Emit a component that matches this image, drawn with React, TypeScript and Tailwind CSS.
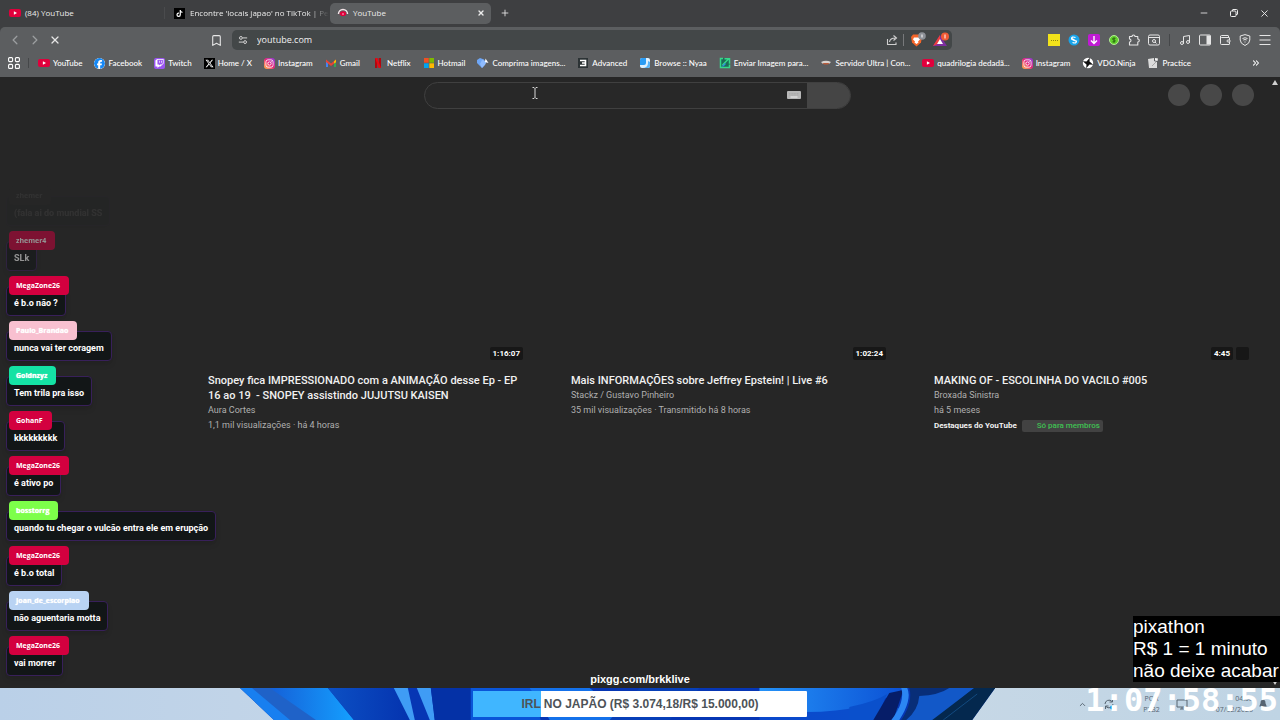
import type { ReactNode } from 'react'
import { Bookmark, ChevronLeft, ChevronRight, ChevronUp, ChevronsRight, Minus, Music, Plus, Wallet, X } from 'lucide-react'
import { FaFacebook, FaInstagram, FaTiktok, FaTwitch, FaXTwitter } from 'react-icons/fa6'

type Message = { name: string; text: string; tag: string; fade?: string; soft?: boolean }

const messages: Message[] = [
    { name: 'zhemer', text: '(fala ai do mundial SS', tag: 'bg-[#262626]', fade: 'opacity-5' },
    { name: 'zhemer4', text: 'SLk', tag: 'bg-[#d3003f]', fade: 'opacity-50' },
    { name: 'MegaZone26', text: 'é b.o não ?', tag: 'bg-[#d3003f]' },
    { name: 'Paulo_Brandao', text: 'nunca vai ter coragem', tag: 'bg-[#f8c0d0]', soft: true },
    { name: 'Goldnzyz', text: 'Tem trila pra isso', tag: 'bg-[#14e2a4]', soft: true },
    { name: 'GohanF', text: 'kkkkkkkkk', tag: 'bg-[#d3003f]' },
    { name: 'MegaZone26', text: 'é ativo po', tag: 'bg-[#d3003f]' },
    { name: 'bosstorrg', text: 'quando tu chegar o vulcão entra ele em erupção', tag: 'bg-[#7dff4a]', soft: true },
    { name: 'MegaZone26', text: 'é b.o total', tag: 'bg-[#d3003f]' },
    { name: 'Joan_de_escorpiao', text: 'não aguentaria motta', tag: 'bg-[#b9d3f3]', soft: true },
    { name: 'MegaZone26', text: 'vai morrer', tag: 'bg-[#d3003f]' },
]

const videos = [
    {
        title: 'Snopey fica IMPRESSIONADO com a ANIMAÇÃO desse Ep - EP 16 ao 19 \u00a0- SNOPEY assistindo JUJUTSU KAISEN',
        channel: 'Aura Cortes',
        meta: '1,1 mil visualizações · há 4 horas',
        duration: '1:16:07',
    },
    {
        title: 'Mais INFORMAÇÕES sobre Jeffrey Epstein! | Live #6',
        channel: 'Stackz / Gustavo Pinheiro',
        meta: '35 mil visualizações · Transmitido há 8 horas',
        duration: '1:02:24',
    },
    {
        title: 'MAKING OF - ESCOLINHA DO VACILO #005',
        channel: 'Broxada Sinistra',
        meta: 'há 5 meses',
        duration: '4:45',
        members: true,
    },
]

function YouTubeIcon() {
    return (
        <svg viewBox="0 0 12 12" className="size-3 shrink-0">
            <rect x="0" y="2" width="12" height="8" rx="2" fill="#e0003c" />
            <path d="M4.9 4.2v3.6L8 6z" fill="#fff" />
        </svg>
    )
}

function InstagramIcon() {
    return (
        <span className="flex size-[11px] shrink-0 items-center justify-center rounded-[3px] bg-linear-to-tr from-[#ffb52e] via-[#e8207a] to-[#8a2be0] text-white">
            <FaInstagram className="size-[9px]" />
        </span>
    )
}

function GmailIcon() {
    return (
        <svg viewBox="0 0 12 12" className="size-3 shrink-0">
            <path d="M1 3v7h2V5z" fill="#4285f4" />
            <path d="M11 3v7H9V5z" fill="#34a853" />
            <path d="M1 2.6 6 6.6l5-4v2.4L6 9 1 5z" fill="#ea4335" />
            <path d="M9 4.2l2-1.6v2.6L9 6.6z" fill="#fbbc04" />
        </svg>
    )
}

function NetflixIcon() {
    return (
        <svg viewBox="0 0 12 12" className="size-3 shrink-0">
            <path d="M3 1h2.3v10H3zM6.7 1H9v10H6.7z" fill="#b1060f" />
            <path d="M3 1h2.3L9 11H6.7z" fill="#e50914" />
        </svg>
    )
}

function MicrosoftIcon() {
    return (
        <svg viewBox="0 0 12 12" className="size-3 shrink-0">
            <path d="M1 1h4.7v4.7H1z" fill="#f25022" />
            <path d="M6.3 1H11v4.7H6.3z" fill="#7fba00" />
            <path d="M1 6.3h4.7V11H1z" fill="#00a4ef" />
            <path d="M6.3 6.3H11V11H6.3z" fill="#ffb900" />
        </svg>
    )
}

function CompressIcon() {
    return (
        <svg viewBox="0 0 12 12" className="size-3 shrink-0">
            <path d="M0 3 3 1l4 1.500v6L5 11 2 8 0 6z" fill="#6ea6f5" />
            <path d="M5 3l5 1-2 4-3 3-2-4z" fill="#8fbcff" />
            <path d="M8.500 1.500 11.500 6 8 5z" fill="#fff" />
        </svg>
    )
}

function AdvancedIcon() {
    return (
        <svg viewBox="0 0 12 12" className="size-3 shrink-0">
            <rect x="1" y="1" width="10" height="10" fill="#2c3335" />
            <path d="M3 3.5h5.500v5H3M5 6h3.500" fill="none" stroke="#fff" strokeWidth="1.6" />
        </svg>
    )
}

function NyaaIcon() {
    return (
        <svg viewBox="0 0 12 12" className="size-3 shrink-0">
            <rect x="1" y="1" width="10" height="10" rx="2" fill="#dff1ff" />
            <path d="M1 3q0-2 2-2h4v5q0 2-2 2H1z" fill="#2a9cf5" />
            <path d="M3 11q6 0 6-5V4l2 1v4q0 2-2 2z" fill="#58b4f8" />
        </svg>
    )
}

function UploadIcon() {
    return (
        <svg viewBox="0 0 12 12" className="size-3 shrink-0">
            <rect x="1" y="1" width="10" height="10" rx="1" fill="#1c6b57" />
            <path d="M4 1.500H1.500v9h9V7.500M3.500 8 9.500 2M5.500 1.700h5v5" fill="none" stroke="#35d88a" strokeWidth="1.500" />
            <path d="M2.500 9.500 6 6l1 1-2.500 2.500z" fill="#2f8fe0" />
        </svg>
    )
}

function ServerIcon() {
    return (
        <svg viewBox="0 0 12 12" className="size-3 shrink-0">
            <path d="M1 5q5-2.500 10 0L9 7H3z" fill="#d8d3cf" />
            <path d="M2.500 6h7L8 7.500H4z" fill="#b65b3c" />
        </svg>
    )
}

function NinjaIcon() {
    return (
        <svg viewBox="0 0 12 12" className="size-3 shrink-0">
            <circle cx="6" cy="6" r="5.200" fill="#fff" />
            <path d="M7.800 0.800 7.500 4.500 11.200 7.800 7.500 7.500 4.200 11.200 4.500 7.500 0.800 4.200 4.500 4.500z" fill="#101010" />
        </svg>
    )
}

function PracticeIcon() {
    return (
        <svg viewBox="0 0 12 12" className="size-3 shrink-0">
            <path d="M1 2l6-1v3l3 1v6H2z" fill="#dcdcdc" />
            <path d="M8 1l3 .500-.500 2.500L8 3.500z" fill="#f4f4f4" />
            <path d="M5 9l4-4" stroke="#a7a7a7" strokeWidth="1" />
        </svg>
    )
}

const bookmarks: { label: string; icon: ReactNode }[] = [
    { label: 'YouTube', icon: <YouTubeIcon /> },
    {
        label: 'Facebook',
        icon: <FaFacebook className="size-[11px] shrink-0 rounded-full bg-white text-[#1588f5]" />,
    },
    {
        label: 'Twitch',
        icon: (
            <span className="flex size-[11px] shrink-0 items-center justify-center rounded-xs bg-[#9a55f0] text-white">
                <FaTwitch className="size-[9px]" />
            </span>
        ),
    },
    {
        label: 'Home / X',
        icon: (
            <span className="flex size-[11px] shrink-0 items-center justify-center bg-black text-white">
                <FaXTwitter className="size-[9px]" />
            </span>
        ),
    },
    { label: 'Instagram', icon: <InstagramIcon /> },
    { label: 'Gmail', icon: <GmailIcon /> },
    { label: 'Netflix', icon: <NetflixIcon /> },
    { label: 'Hotmail', icon: <MicrosoftIcon /> },
    { label: 'Comprima imagens...', icon: <CompressIcon /> },
    { label: 'Advanced', icon: <AdvancedIcon /> },
    { label: 'Browse :: Nyaa', icon: <NyaaIcon /> },
    { label: 'Enviar Imagem para...', icon: <UploadIcon /> },
    { label: 'Servidor Ultra | Con...', icon: <ServerIcon /> },
    { label: 'quadrilogia dedadã...', icon: <YouTubeIcon /> },
    { label: 'Instagram', icon: <InstagramIcon /> },
    { label: 'VDO.Ninja', icon: <NinjaIcon /> },
    { label: 'Practice', icon: <PracticeIcon /> },
]

function TabStrip() {
    return (
        <div className="flex h-[27px] items-center bg-[#3e3f41] pb-px text-[8px] text-[#ececec]">
            <div className="flex w-[165px] items-center gap-1 border-r border-[#4a4b4d] pl-[9px]">
                <YouTubeIcon />
                <span>(84) YouTube</span>
            </div>
            <div className="flex w-[165px] items-center gap-[5px] pl-[9px]">
                <span className="flex size-[11px] shrink-0 items-center justify-center bg-black text-white">
                    <FaTiktok className="size-[7px]" />
                </span>
                <span className="whitespace-nowrap mask-r-from-85%">Encontre 'locais japao' no TikTok | Pe</span>
            </div>
            <div className="flex h-[21px] w-[161px] items-center gap-1 rounded-[5px] bg-[#5c5e60] pr-[6px] pl-[7px]">
                <svg viewBox="0 0 12 12" className="size-3 shrink-0">
                    <path d="M1.500 7A4.500 4.500 0 0 1 10.500 7" fill="none" stroke="#f4e4e8" strokeWidth="1.500" />
                    <path d="M2.700 7.500a3.300 3.300 0 0 1 6.600 0L7.500 9h-3z" fill="#e0003c" />
                    <circle cx="6" cy="7" r=".700" fill="#fff" />
                </svg>
                <span className="flex-1">YouTube</span>
                <button type="button" aria-label="Fechar guia">
                    <X className="size-2" strokeWidth={4} />
                </button>
            </div>
            <button type="button" aria-label="Nova guia" className="ml-[9px]">
                <Plus className="size-[10px]" strokeWidth={2} />
            </button>
            <div className="ml-auto flex items-center gap-5 pr-[10px]">
                <button type="button" aria-label="Minimizar">
                    <Minus className="size-[10px]" />
                </button>
                <button type="button" aria-label="Restaurar">
                    <svg viewBox="0 0 10 10" className="size-[10px]" fill="none" stroke="currentColor">
                        <rect x="1.500" y="3" width="5.500" height="5.500" rx="1" />
                        <path d="M3.500 3V2q0-.500.500-.500h3.500q1 0 1 1V6q0 .500-.500.500H7" />
                    </svg>
                </button>
                <button type="button" aria-label="Fechar">
                    <X className="size-[11px]" />
                </button>
            </div>
        </div>
    )
}

function AddressBar() {
    return (
        <div className="flex h-5 w-[720px] items-center rounded-[5px] bg-[#434748] pr-0.5 pl-[6px]">
            <svg viewBox="0 0 12 12" className="size-[10px]" fill="none" stroke="#d5d5d5" strokeWidth="1.200">
                <circle cx="3.500" cy="3.500" r="1.700" />
                <path d="M5.500 3.500H11M1 8.500h5.500" />
                <circle cx="8.500" cy="8.500" r="1.700" />
            </svg>
            <input
                type="text"
                aria-label="Endereço"
                defaultValue="youtube.com"
                className="ml-[9px] min-w-0 flex-1 bg-transparent text-[9px] text-[#f2f2f2] outline-none"
            />
            <div className="flex items-center gap-[5px]">
                <button type="button" aria-label="Compartilhar">
                    <svg viewBox="0 0 12 12" className="size-3" fill="none" stroke="#cfcfcf" strokeWidth="1.100">
                        <path d="M1.500 5v5.500h8.500V8.500M3.500 8q.500-4 6-4M7.500 1.500 10.500 4 7.500 6.500" />
                    </svg>
                </button>
                <span className="h-3 w-px bg-[#77797b]" />
                <button type="button" aria-label="Brave Shields" className="ml-px">
                    <svg viewBox="0 0 16 16" className="size-4">
                        <path d="M3 2.500h7l2 2.500-1 5.500-4.500 4L2 10.500 1 5z" fill="#f4662a" />
                        <path d="M4 5.500h5l1 2-2 2 .500 1-2 1.500-2-1.500.500-1-2-2z" fill="#fff" />
                        <circle cx="12" cy="4" r="3.800" fill="#8d9197" />
                        <path d="M12 2.500v3" stroke="#fff" strokeWidth="1" />
                    </svg>
                </button>
                <button type="button" aria-label="Brave Rewards" className="ml-px">
                    <svg viewBox="0 0 18 16" className="h-4 w-[18px]">
                        <path d="M8 3 1 14h14z" fill="#7d2ea0" />
                        <path d="M8 3 1 14l7-3z" fill="#ef3d3d" />
                        <path d="M8 7l-3 5h6z" fill="#fff" />
                        <circle cx="13" cy="4.500" r="4" fill="#f05a35" />
                        <path d="M13 2.500v4" stroke="#fff" strokeWidth="1" />
                    </svg>
                </button>
            </div>
        </div>
    )
}

function Toolbar() {
    return (
        <div className="bg-[#3e3f41]">
            <div className="flex h-[27px] items-center rounded-t-[5px] bg-[#5c5e60] px-[9px] pb-px text-[#e6e6e6]">
                <div className="flex w-[223px] items-center gap-2 pr-[9px]">
                    <button type="button" aria-label="Voltar" className="text-[#9b9d9f]">
                        <ChevronLeft className="size-3 scale-125" strokeWidth={2} />
                    </button>
                    <button type="button" aria-label="Avançar" className="text-[#9b9d9f]">
                        <ChevronRight className="size-3 scale-125" strokeWidth={2} />
                    </button>
                    <button type="button" aria-label="Parar">
                        <X className="size-3" strokeWidth={2.5} />
                    </button>
                    <button type="button" aria-label="Favoritar" className="ml-auto">
                        <Bookmark className="size-[13px]" strokeWidth={2} />
                    </button>
                </div>
                <AddressBar />
                <div className="ml-auto flex items-center gap-2">
                    <span className="flex size-3 items-center justify-center bg-[#f2e21b]">
                        <span className="w-[7px] border-t border-dotted border-[#8d8410]" />
                    </span>
                    <svg viewBox="0 0 12 12" className="size-3">
                        <circle cx="6" cy="6" r="5.500" fill="#18a4ea" />
                        <path d="M7.500 3.500Q3.500 2 3.500 5q2.500 2 5 2Q8.500 10 4.500 8.500M4 4.500l4.500 3" fill="none" stroke="#fff" strokeWidth="1.200" />
                    </svg>
                    <svg viewBox="0 0 12 12" className="size-3">
                        <rect width="12" height="12" rx="2" fill="#c01ad4" />
                        <path d="M6 2V9.500M3 6.500l3 3 3-3" fill="none" stroke="#fff" strokeWidth="1.400" />
                    </svg>
                    <svg viewBox="0 0 12 12" className="size-3">
                        <circle cx="6" cy="6" r="4.500" fill="#62d12d" stroke="#b5ec97" strokeWidth="1" />
                        <path d="M7.500 4.300H5.300q-1 0-.800.900t1.500.800 1.200.900-.900.900H4.500M6 3.300v5.400" fill="none" stroke="#245a0c" strokeWidth=".800" />
                    </svg>
                    <svg viewBox="0 0 12 12" className="size-3" fill="none" stroke="currentColor" strokeWidth="1.100">
                        <path d="M1.500 2.500H4a1.500 1.500 0 0 1 3 0h2.800V5a1.500 1.500 0 0 1 0 3v3H1.500V8a1.500 1.500 0 0 0 0-3z" strokeLinejoin="round" />
                    </svg>
                    <svg viewBox="0 0 12 12" className="size-3" fill="none" stroke="currentColor">
                        <rect x=".500" y="1" width="11" height="10" rx="1.500" />
                        <path d="M1 3.500h10M7 8l1.500 1.500" />
                        <circle cx="6" cy="7" r="1.500" />
                    </svg>
                    <span className="mx-px h-3 w-px bg-[#454749]" />
                    <Music className="size-3" />
                    <svg viewBox="0 0 12 12" className="size-3" fill="none" stroke="currentColor">
                        <rect x=".500" y="1" width="11" height="10" rx="1" />
                        <path d="M7.500 1.500h3.500v9H7.500z" fill="currentColor" stroke="none" />
                    </svg>
                    <Wallet className="size-3" />
                    <svg viewBox="0 0 12 12" className="size-3" fill="none" stroke="currentColor">
                        <path d="M6 .600 10.800 2v4q0 3.500-4.800 5.500Q1.200 9.500 1.200 6V2z" />
                        <path d="M3.500 4.500q2.500-1.500 5 0M4.300 6q1.700-1 3.400 0M6 7.500v1" />
                    </svg>
                    <button type="button" aria-label="Menu">
                        <svg viewBox="0 0 12 12" className="size-3" stroke="currentColor">
                            <path d="M.500 1.500h11M.500 6h11M.500 10.500h11" />
                        </svg>
                    </button>
                </div>
            </div>
        </div>
    )
}

function BookmarksBar() {
    return (
        <nav className='flex h-[23px] items-center bg-[#5c5e60] pb-[5px] pl-2 font-["Lato","Open_Sans",sans-serif] text-white'>
            <svg viewBox="0 0 12 12" className="size-3" fill="none" stroke="currentColor" strokeWidth="1.100">
                <rect x=".600" y=".600" width="4" height="4" rx="1" />
                <rect x="7.400" y=".600" width="4" height="4" rx="1" />
                <rect x=".600" y="7.400" width="4" height="4" rx="1" />
                <rect x="7.400" y="7.400" width="4" height="4" rx="1" />
            </svg>
            <span className="mr-[9px] ml-2 h-[10px] w-px bg-[#454749]" />
            <ul className="flex gap-3">
                {bookmarks.map((bookmark, i) => (
                    <li key={i}>
                        <a href="#" className="flex items-center gap-[3px] text-[8px] leading-3 font-medium whitespace-nowrap">
                            {bookmark.icon}
                            {bookmark.label}
                        </a>
                    </li>
                ))}
            </ul>
            <button type="button" aria-label="Mais favoritos" className="mr-[19px] ml-auto">
                <ChevronsRight className="size-[10px]" strokeWidth={2.5} />
            </button>
        </nav>
    )
}

function SearchHeader() {
    return (
        <header className="flex h-9 items-center pr-4 pl-5">
            <div className="flex-1" />
            <form className="flex h-[27px] w-[427px] overflow-hidden rounded-full border border-[#404040] bg-[#282828]">
                <div className="relative flex min-w-0 flex-1 items-center pr-[6px]">
                    <input
                        type="text"
                        aria-label="Pesquisar"
                        className="h-full min-w-0 flex-1 bg-transparent px-4 text-[11px] text-white outline-none"
                    />
                    <svg viewBox="0 0 14 8" className="h-2 w-[14px]">
                        <rect width="14" height="8" rx="1" fill="#b8b8b8" />
                        <path d="M2 2.500h10M2 4h10" stroke="#a0a0a0" strokeWidth=".600" strokeDasharray="1 .600" />
                        <path d="M3.500 6h7" stroke="#efefef" strokeWidth="1" />
                    </svg>
                    {/* text cursor */}
                    <svg
                        viewBox="0 0 6 12"
                        className="absolute top-1 left-[107px] h-3 w-[6px]"
                        fill="none"
                        stroke="#d8d8d8"
                    >
                        <path d="M.500.500h1.500L3 1.500 4 .500h1.500M3 1.500v9M.500 11.500h1.500l1-1 1 1h1.500" />
                    </svg>
                </div>
                <button type="submit" aria-label="Buscar" className="w-[43px] bg-[#454545]" />
            </form>
            <div className="flex flex-1 justify-end gap-[10px]">
                <button type="button" aria-label="Criar" className="size-[22px] rounded-full bg-[#484848]" />
                <button type="button" aria-label="Notificações" className="size-[22px] rounded-full bg-[#484848]" />
                <button type="button" aria-label="Conta" className="size-[22px] rounded-full bg-[#484848]" />
            </div>
        </header>
    )
}

function VideoCard({ video }: { video: (typeof videos)[number] }) {
    return (
        <article>
            <div className="flex aspect-video items-end justify-end gap-[3px] p-[5px]">
                <span className="rounded-xs bg-[#171717] px-[3px] text-[8px] leading-[13px] font-bold text-white">
                    {video.duration}
                </span>
                {video.members && <span className="size-[13px] rounded-xs bg-[#171717]" />}
            </div>
            <div className="mt-2 pl-8 text-[9px] leading-[15px] text-[#b0b0b0]">
                <h3 className="pr-1 text-[11px] leading-[15px] font-medium text-[#f1f1f1]">
                    <a href="#">{video.title}</a>
                </h3>
                <p>{video.channel}</p>
                <p>{video.meta}</p>
                {video.members && (
                    <p className="flex items-center gap-[5px] text-[8px] font-bold text-[#f1f1f1]">
                        Destaques do YouTube
                        <span className="rounded-xs bg-[#424242] pr-[3px] pl-[15px] leading-3 font-medium text-[#3fc152]">
                            Só para membros
                        </span>
                    </p>
                )}
            </div>
        </article>
    )
}

function Chat() {
    return (
        <ul className="absolute bottom-3 left-[6px] flex flex-col gap-[5px]">
            {messages.map((message, i) => (
                <li key={i} className={`flex flex-col items-start ${message.fade ?? ''}`}>
                    <span
                        className={`z-10 ml-[3px] h-[19px] rounded-[4px] pr-[9px] pl-[7px] font-["Open_Sans"] text-[7px] leading-[19px] font-bold text-white ${
                            message.tag
                        } ${message.soft ? 'text-shadow-[0_0_1px_white]' : ''}`}
                    >
                        {message.name}
                    </span>
                    <span className="-mt-[9px] h-[30px] rounded-[4px] border border-[#38205a] bg-[#121617] px-[7px] pt-[3px] text-[9px] leading-[26px] font-bold whitespace-nowrap text-white shadow-md">
                        {message.text}
                    </span>
                </li>
            ))}
        </ul>
    )
}

function Wallpaper() {
    return (
        <svg
            viewBox="0 0 756 32"
            preserveAspectRatio="none"
            className="absolute inset-y-0 left-[18.75%] h-full w-[59%]"
            aria-hidden="true"
        >
            <defs>
                <linearGradient id="petal" x1="0" x2="1">
                    <stop offset="0" stopColor="#1560d8" />
                    <stop offset="1" stopColor="#14a0ff" />
                </linearGradient>
                <linearGradient id="deep" x1="0" x2="1">
                    <stop offset="0" stopColor="#0c50c4" />
                    <stop offset="1" stopColor="#0432ae" />
                </linearGradient>
                <linearGradient id="sweep" x1="0" x2="1">
                    <stop offset="0" stopColor="#2492f8" />
                    <stop offset="1" stopColor="#0b50d4" />
                </linearGradient>
                <linearGradient id="under" x1="0" x2="1">
                    <stop offset="0" stopColor="#0a48cc" />
                    <stop offset="1" stopColor="#0a50cc" />
                </linearGradient>
            </defs>
            <path d="M0 0h756l-23 32H34z" fill="#0636b4" />
            <path d="M0 0h40l50 32H34z" fill="#187ff0" />
            <path d="M12 0h20l46 32H50z" fill="#1f62c8" />
            <path d="M30 0h58l26 32H76z" fill="url(#petal)" />
            <path d="M88 0h70l14 32h-58z" fill="url(#deep)" />
            <path d="M154 0h14l7 32h-5z" fill="#3f9cf5" />
            <path d="M177 0h14l4 32h-5z" fill="#3f9cf5" />
            <path d="M191 0h40v32h-36z" fill="#0431a6" />
            <path d="M231 0h60l10 32h-70z" fill="#0a55d8" />
            <path d="M290 0h60l40 32h-80z" fill="#1471ea" />
            <path d="M400 0h60l-30 32h-60z" fill="#073fb8" />
            <path d="M520 20h140v12H520z" fill="url(#under)" />
            <path d="M520 0h145q-35 24-99 24h-46z" fill="url(#sweep)" />
            <path d="M610 19q25-5 38-13l-12 26h-26z" fill="#0a50cc" />
            <path d="M650 5l14-3-10 30h-20z" fill="#061d68" />
            <path d="M662 0h6q5 12-8 32h-8q14-18 10-32z" fill="#2b86f4" />
            <path d="M670 0h70l-40 32h-38q12-18 8-32z" fill="#082e78" />
            <path d="M680 8q20-1 30-8h25l-40 32h-28q12-10 13-24z" fill="#1258c8" />
            <path d="M735 0h21l-23 32h-40z" fill="#04284e" />
            <path d="M738 6 704 32" stroke="#134a80" fill="none" />
        </svg>
    )
}

function SystemTray() {
    return (
        <div className="relative ml-auto flex items-center pr-3 text-right text-[7px] leading-[11px] text-[#566471]">
            <ChevronUp className="mr-4 size-[9px]" strokeWidth={2.5} />
            <svg viewBox="0 0 12 12" className="mr-7 size-3" fill="none" stroke="currentColor">
                <path d="M2 6a4 4 0 0 1 7-2.500M9.500 1v3h-3M10 6a4 4 0 0 1-7 2.500M2.500 11V8h3" />
                <circle cx="9" cy="9.500" r="2" fill="#1b8fe6" stroke="none" />
            </svg>
            <p className="mr-4 text-center">
                POR
                <br />
                PTB2
            </p>
            <svg viewBox="0 0 12 12" className="mr-7 size-3" fill="none" stroke="currentColor">
                <path d="M1 2h10v7H1zM4 11h4M6 9v2" />
            </svg>
            <p className="mr-[5px]">
                04:58
                <br />
                07/02/2026
            </p>
            <svg viewBox="0 0 12 12" className="size-[10px]" fill="currentColor">
                <path d="M6 1q3 0 3 4l1.500 4h-9L3 5q0-4 3-4zM4.500 10h3L6 11.500z" />
            </svg>
        </div>
    )
}

function Taskbar() {
    const goal = { current: 3074.18, total: 15000 }

    return (
        <footer className="relative flex h-8 items-center bg-linear-to-r from-[#bad0e8] via-[#cddbe8] to-[#bfd4e4]">
            <Wallpaper />
            <div
                role="progressbar"
                aria-label="IRL no Japão"
                aria-valuenow={goal.current}
                aria-valuemax={goal.total}
                className="absolute inset-x-0 top-[3px] mx-auto h-[26px] w-[334px] rounded-[1px] bg-white text-center font-[Liberation_Sans] text-[12px] leading-[26px] font-bold text-[#4d5358]"
            >
                <div
                    className="absolute inset-y-0 left-0 bg-[#40b6ff]"
                    style={{ width: `${(goal.current / goal.total) * 100}%` }}
                />
                <span className="relative">IRL NO JAPÃO (R$ 3.074,18/R$ 15.000,00)</span>
            </div>
            <SystemTray />
            <time className='absolute right-[2px] bottom-0 font-["DejaVu_Sans_Mono"] text-[32px] leading-10 font-bold text-white'>
                1:07:58:55
            </time>
        </footer>
    )
}

export default function App() {
    return (
        <div className='flex min-h-screen flex-col bg-[#262626] font-["Open_Sans","Noto_Sans",sans-serif]'>
            <TabStrip />
            <Toolbar />
            <BookmarksBar />
            <main className="relative flex-1 pr-[10px] font-[Roboto]">
                <SearchHeader />
                <section className="mt-[54px] grid grid-cols-3 gap-[11px] pr-4 pl-44">
                    {videos.map((video) => (
                        <VideoCard key={video.title} video={video} />
                    ))}
                </section>
                <Chat />
                <div className="absolute inset-y-0 right-0 flex w-[10px] flex-col items-center justify-between py-[3px]">
                    <svg viewBox="0 0 6 5" className="h-[5px] w-[6px]">
                        <path d="M3 0l3 5H0z" fill="#cfcfcf" />
                    </svg>
                    <svg viewBox="0 0 6 5" className="h-[5px] w-[6px]">
                        <path d="M0 0h6L3 5z" fill="#cfcfcf" />
                    </svg>
                </div>
                <p className="absolute inset-x-0 bottom-0 text-center font-[Liberation_Sans] text-[11px] leading-[18px] font-bold text-white">
                    pixgg.com/brkklive
                </p>
                <p className="absolute right-0 bottom-[6px] w-[147px] overflow-hidden bg-black font-[Liberation_Sans] text-[19px] leading-[22px] whitespace-nowrap text-white">
                    pixathon
                    <br />
                    R$ 1 = 1 minuto
                    <br />
                    não deixe acabar
                </p>
            </main>
            <Taskbar />
        </div>
    )
}
